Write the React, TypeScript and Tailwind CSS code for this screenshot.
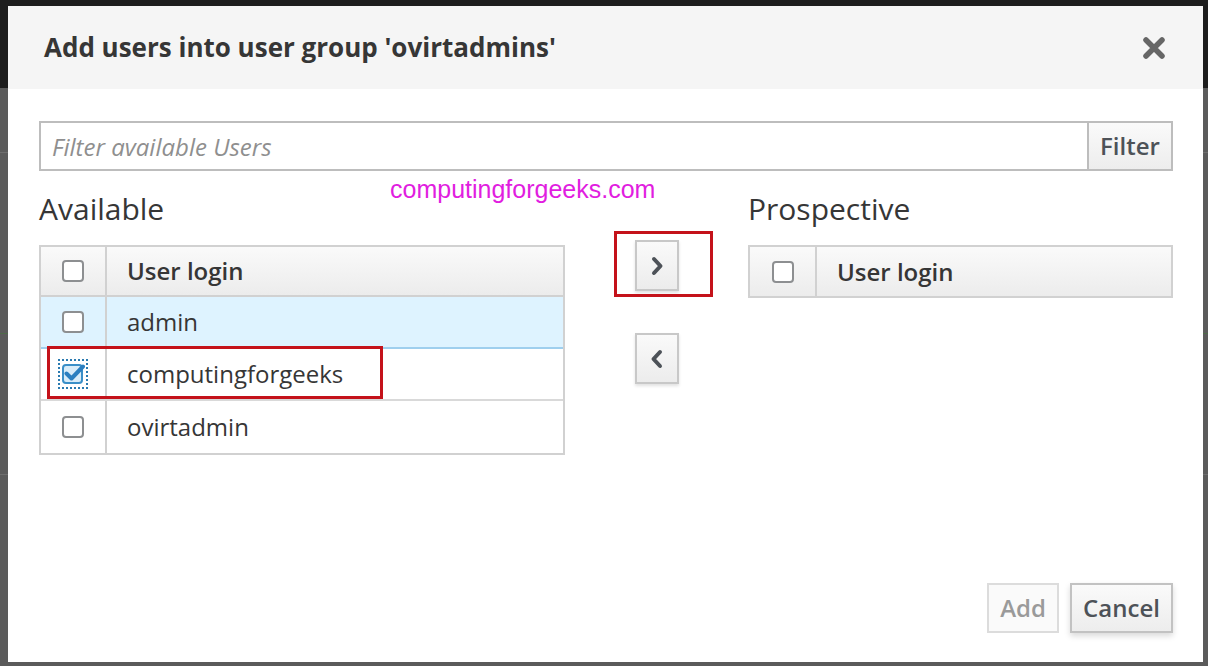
import { useState } from 'react'

const font = { fontFamily: '"Open Sans", "Liberation Sans", sans-serif' }

function Box({ checked = false, focus = false }: { checked?: boolean; focus?: boolean }) {
  if (checked) {
    return (
      <span className={`relative inline-flex h-[26px] w-[26px] items-center justify-center ${focus ? 'outline-2 outline-dotted outline-[#2a7ab0]' : ''}`}>
        <svg width="24" height="24" viewBox="0 0 24 24">
          <rect x="2" y="3" width="19" height="18" rx="3" fill="#d8ecf9" stroke="#3a8fc8" strokeWidth="2" />
          <path d="M5.5 11.5 L10.5 16.5 L22 4.5" fill="none" stroke="#2b7fc0" strokeWidth="4" strokeLinecap="round" strokeLinejoin="round" />
        </svg>
      </span>
    )
  }
  return <span className="inline-block h-[22px] w-[22px] rounded-[4px] border-2 border-[#8d8f91] bg-white" />
}

function Chevron({ dir }: { dir: 'left' | 'right' }) {
  return (
    <svg width="16" height="22" viewBox="0 0 16 22">
      <path
        d={dir === 'right' ? 'M5 4 L11.5 11 L5 18' : 'M11 4 L4.5 11 L11 18'}
        fill="none"
        stroke="#4d5258"
        strokeWidth="4"
        strokeLinecap="round"
        strokeLinejoin="round"
      />
    </svg>
  )
}

const USERS = ['admin', 'computingforgeeks', 'ovirtadmin']

export default function App() {
  const [filter, setFilter] = useState('')

  return (
    <div className="relative h-[666px] w-[1208px] overflow-hidden bg-[#5b5b5b]" style={font}>
      {/* dimmed page behind the dialog */}
      <div className="h-[88px] bg-[#1d1d1d]" />
      <div className="mt-[64px] h-px bg-[#6e6e6e]" />
      <div className="mt-[180px] h-px bg-[#4f6b4a]" />
      <div className="mt-[140px] h-px bg-[#6e6e6e]" />

      <div className="absolute left-[8px] top-[6px] flex h-[656px] w-[1195px] flex-col bg-white text-[#363636]">
        <div className="flex h-[83px] items-center justify-between bg-[#f5f5f5] pl-[36px] pr-[37px]">
          <h1 className="text-[26px] font-bold">Add users into user group 'ovirtadmins'</h1>
          <svg width="24" height="24" viewBox="0 0 24 24">
            <path d="M4 4 L20 20 M20 4 L4 20" stroke="#666" strokeWidth="5.5" strokeLinecap="round" />
          </svg>
        </div>

        <div className="relative flex flex-1 flex-col pl-[31px] pr-[30px] pt-[32px]">
          <div className="flex h-[50px]">
            <input
              value={filter}
              onChange={(e) => setFilter(e.target.value)}
              placeholder="Filter available Users"
              className="h-full flex-1 border-2 border-r-0 border-[#bdbdbd] px-[11px] text-[24px] outline-none placeholder:italic placeholder:text-[#8f8f8f]"
            />
            <button className="h-full w-[86px] border-2 border-[#bdbdbd] bg-linear-to-b from-[#fafafa] to-[#ededed] text-[24px] font-semibold text-[#4d5258]">
              Filter
            </button>
          </div>

          <span
            className="absolute left-[382px] top-[86px] text-[25px] leading-[28px] text-[#e11de0]"
            style={{ fontFamily: '"Liberation Sans", Arial, sans-serif' }}
          >
            computingforgeeks.com
          </span>

          <div className="flex">
            <div className="w-[526px]">
              <h2 className="mb-[19px] mt-[21px] h-[34px] text-[30px] leading-[34px]">Available</h2>
              <div className="border-2 border-[#d1d1d1]">
                <div className="flex h-[50px] items-center border-b-2 border-[#d1d1d1] bg-linear-to-b from-[#fafafa] to-[#ececec]">
                  <div className="flex h-full w-[66px] items-center justify-center border-r-2 border-[#d1d1d1]">
                    <Box />
                  </div>
                  <span className="pl-[20px] text-[24px] font-semibold">User login</span>
                </div>
                {USERS.map((u, i) => (
                  <div
                    key={u}
                    className={`relative flex h-[52px] items-center ${i < USERS.length - 1 ? 'border-b-2' : ''} ${
                      i === 0 ? 'border-[#9fcfee] bg-[#def3ff]' : 'border-[#d9d9d9] bg-white'
                    }`}
                  >
                    <div className="flex h-full w-[66px] items-center justify-center border-r-2 border-[#d1d1d1]">
                      <Box checked={i === 1} focus={i === 1} />
                    </div>
                    <span className="pl-[20px] text-[24px]">{u}</span>
                    {i === 1 && (
                      <div className="absolute left-[6px] top-[-3px] h-[53px] w-[336px] border-[3px] border-[#c4121a]" />
                    )}
                  </div>
                ))}
              </div>
            </div>

            <div className="w-[183px] pt-[69px]">
              <div className="relative ml-[70px] w-[44px]">
                <button className="flex h-[51px] w-[44px] items-center justify-center border-2 border-[#c8c8c8] bg-linear-to-b from-[#fafafa] to-[#ececec] shadow-[0_2px_3px_rgba(0,0,0,0.12)]">
                  <Chevron dir="right" />
                </button>
                <div className="absolute left-[-21px] top-[-9px] h-[66px] w-[99px] border-[3px] border-[#c4121a]" />
                <button className="mt-[42px] flex h-[51px] w-[44px] items-center justify-center border-2 border-[#c8c8c8] bg-linear-to-b from-[#fafafa] to-[#ececec] shadow-[0_2px_3px_rgba(0,0,0,0.12)]">
                  <Chevron dir="left" />
                </button>
              </div>
            </div>

            <div className="flex-1">
              <h2 className="mb-[19px] mt-[21px] h-[34px] text-[30px] leading-[34px]">Prospective</h2>
              <div className="flex h-[53px] items-center border-2 border-[#d1d1d1] bg-linear-to-b from-[#fafafa] to-[#ececec]">
                <div className="flex h-full w-[67px] items-center justify-center border-r-2 border-[#d1d1d1]">
                  <Box />
                </div>
                <span className="pl-[20px] text-[24px] font-semibold">User login</span>
              </div>
            </div>
          </div>

          <div className="mt-auto flex justify-end gap-[11px] pb-[29px]">
            <button className="h-[50px] w-[72px] border-2 border-[#dcdcdc] bg-[#fafafa] text-[24px] font-semibold text-[#9a9a9a]">
              Add
            </button>
            <button className="h-[50px] w-[103px] border-2 border-[#c2c2c2] bg-linear-to-b from-[#fafafa] to-[#ededed] text-[24px] font-semibold text-[#4d5258] shadow-[0_3px_6px_rgba(0,0,0,0.15)]">
              Cancel
            </button>
          </div>
        </div>
      </div>
    </div>
  )
}
